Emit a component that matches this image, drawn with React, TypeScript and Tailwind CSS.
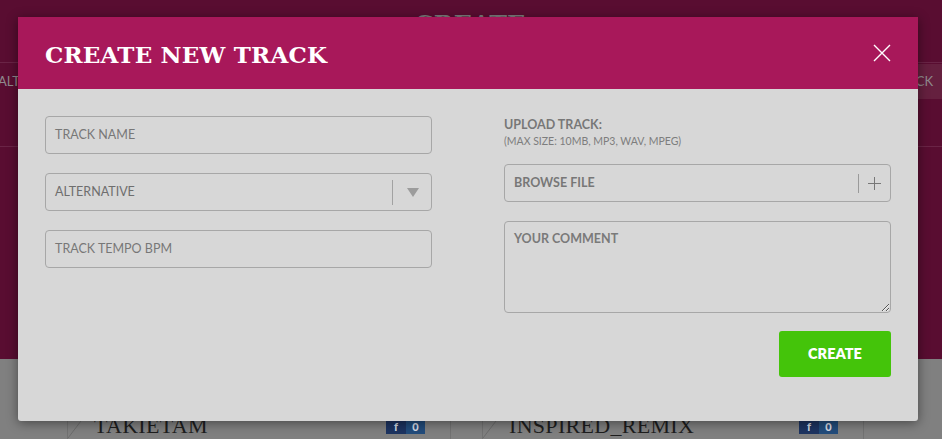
export default function App() {
  return (
    <div className="relative w-[942px] h-[439px] overflow-hidden bg-[#808080] font-['Lato',sans-serif]">
      {/* page behind the overlay */}
      <div className="h-[359px] bg-[#590d31] flex flex-col">
        <div className="h-[63px] border-b border-[#6a2446] flex justify-center pt-[13px]">
          <span className="font-['DejaVu_Serif',serif] font-bold text-[24px] leading-none text-[#7d7d7d] ml-[-2px]">CREATE</span>
        </div>
        <div className="h-[84px] border-b border-[#6a2446] flex justify-between items-start pt-[1px]">
          <span className="text-[13px] text-[#8f8a8d] leading-[35px] ml-[-2px]">ALT</span>
          <span className="w-[60px] h-[35px] bg-[#65203f] text-[13px] text-[#8f8a8d] leading-[35px] text-right pr-[9px]">TRACK</span>
        </div>
      </div>
      <div className="flex gap-[31px] pl-[67px]">
        <Card title="TAKIETAM" width="w-[384px]" />
        <Card title="INSPIRED_REMIX" width="w-[382px]" />
      </div>

      {/* modal */}
      <div className="absolute left-[18px] top-[17px] w-[900px] h-[404px] bg-[#d7d7d7] rounded-b-[3px] shadow-[0_2px_12px_rgba(0,0,0,0.45)] flex flex-col">
        <div className="h-[72px] bg-[#a8185a] flex items-center justify-between pl-[27px] pr-[27px]">
          <h1 className="font-['DejaVu_Serif',serif] font-bold text-[23px] text-white tracking-[0.2px] pt-[4px]">CREATE NEW TRACK</h1>
          <svg width="18" height="18" viewBox="0 0 18 18">
            <path d="M1 1L17 17M17 1L1 17" stroke="white" strokeWidth="1.4" />
          </svg>
        </div>
        <div className="flex gap-[72px] px-[27px] pt-[27px]">
          <div className="w-[387px] flex flex-col gap-[19px]">
            <Field text="TRACK NAME" />
            <div className="h-[38px] rounded-[4px] border border-[#a7a7a7] flex items-center pl-[9px]">
              <span className="flex-1 text-[12.5px] text-[#6e6e6e] pt-[1px]">ALTERNATIVE</span>
              <span className="h-[25px] border-l border-[#a2a2a2]" />
              <span className="w-0 h-0 ml-[14px] mr-[12px] mt-[1px] border-l-[6px] border-r-[6px] border-t-[9px] border-l-transparent border-r-transparent border-t-[#9c9c9c]" />
            </div>
            <Field text="TRACK TEMPO BPM" />
          </div>
          <div className="w-[387px] flex flex-col">
            <div className="text-[12.5px] font-bold text-[#777] leading-[15px] pt-[1px]">UPLOAD TRACK:</div>
            <div className="text-[10.5px] text-[#7d7d7d] leading-[14px] pt-[2px]">(MAX SIZE: 10MB, MP3, WAV, MPEG)</div>
            <div className="mt-[16px] h-[38px] rounded-[4px] border border-[#a7a7a7] flex items-center pl-[9px]">
              <span className="flex-1 text-[12.5px] font-bold text-[#777] pt-[1px]">BROWSE FILE</span>
              <span className="h-[19px] border-l border-[#9a9a9a]" />
              <svg width="13" height="13" viewBox="0 0 13 13" className="ml-[9px] mr-[9px]">
                <path d="M6.5 0V13M0 6.5H13" stroke="#777" strokeWidth="1" />
              </svg>
            </div>
            <textarea
              placeholder="YOUR COMMENT"
              className="mt-[19px] h-[92px] rounded-[4px] border border-[#a7a7a7] bg-transparent px-[9px] pt-[9px] text-[12.5px] font-bold leading-[16px] text-[#777] placeholder:text-[#7a7a7a] outline-none"
            />
            <div className="flex justify-end mt-[18px]">
              <button className="w-[112px] h-[46px] rounded-[3px] bg-[#44c40a] text-white font-extrabold text-[14.5px]">CREATE</button>
            </div>
          </div>
        </div>
      </div>
    </div>
  );
}

function Field({ text }: { text: string }) {
  return (
    <div className="h-[38px] rounded-[4px] border border-[#a7a7a7] flex items-center pl-[9px]">
      <span className="text-[12.5px] text-[#777] pt-[1px]">{text}</span>
    </div>
  );
}

function Card({ title, width }: { title: string; width: string }) {
  return (
    <div className={`${width} h-[80px] border-x border-[#727272] relative flex items-end justify-between pl-[26px] pr-[25px] pb-[2px]`}>
      <svg width="14" height="18" viewBox="0 0 14 18" className="absolute left-0 bottom-0">
        <path d="M0 17L13 0" stroke="#6c6c6c" strokeWidth="1" />
      </svg>
      <span className="font-['Liberation_Serif',serif] text-[22px] leading-none text-[#1e1e1e] tracking-[0.3px]">{title}</span>
      <span className="flex h-[14px] mb-[3px] text-[11px] font-black text-[#d6dbe4] leading-[14px]">
        <span className="w-[20px] bg-[#1d3461] text-center">f</span>
        <span className="w-[19px] bg-[#224c7c] text-center">0</span>
      </span>
    </div>
  );
}
